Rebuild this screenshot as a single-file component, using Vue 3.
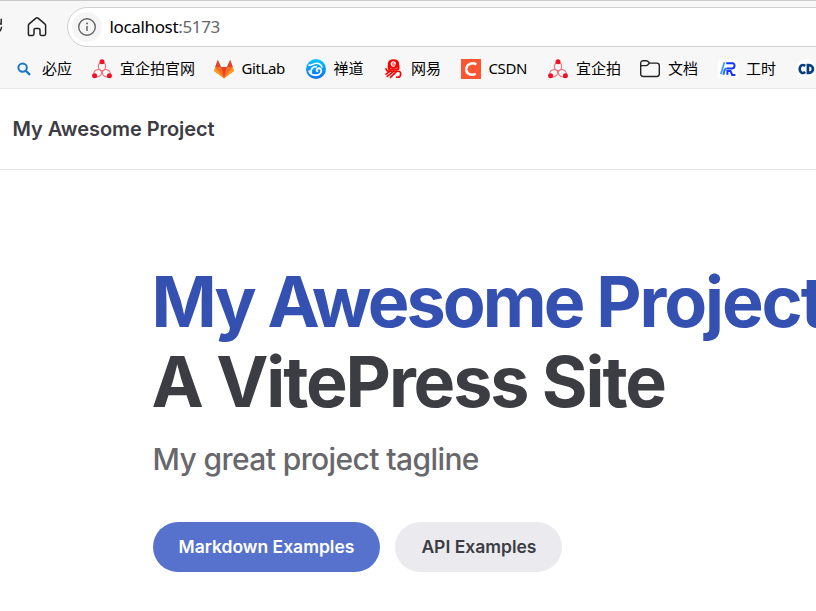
<script setup>
const bookmarks = [
  { icon: 'search', label: '必应' },
  { icon: 'people', label: '宜企拍官网' },
  { icon: 'gitlab', label: 'GitLab', latin: true },
  { icon: 'wave', label: '禅道' },
  { icon: 'netease', label: '网易' },
  { icon: 'csdn', label: 'CSDN', latin: true },
  { icon: 'people', label: '宜企拍' },
  { icon: 'folder', label: '文档' },
  { icon: 'hours', label: '工时' },
  { icon: 'cd', label: '' }
]
</script>

<template>
  <div class="window">
    <header class="browser">
      <div class="toolbar">
        <svg class="reload" width="20" height="20" viewBox="0 0 20 20">
          <path d="M18.2 1.8v5.2h-4.3M18.6 9.8a7.7 7.7 0 0 1-2.8 5.4" />
        </svg>
        <svg class="home" width="20" height="20" viewBox="0 0 20 20">
          <path d="M1.4 8.5c0-.7.3-1.3.8-1.7l6.5-5.4a2 2 0 0 1 2.6 0l6.5 5.4c.5.4.8 1 .8 1.7v8.6c0 .8-.6 1.4-1.4 1.4h-2.8c-.8 0-1.4-.6-1.4-1.4v-4.3c0-.8-.6-1.4-1.4-1.4H8.4c-.8 0-1.4.6-1.4 1.4v4.3c0 .8-.6 1.4-1.4 1.4H2.8c-.8 0-1.4-.6-1.4-1.4z" />
        </svg>
        <div class="address">
          <span class="info">
            <svg width="20" height="20" viewBox="0 0 20 20">
              <circle cx="10" cy="10" r="8.3" fill="none" stroke="#666" stroke-width="1.4" />
              <path d="M10 9v5" stroke="#666" stroke-width="1.5" />
              <circle cx="10" cy="6.5" r="1" fill="#666" />
            </svg>
          </span>
          <span class="url">localhost<span class="port">:5173</span></span>
        </div>
      </div>
      <nav class="bookmarks">
        <div v-for="(b, i) in bookmarks" :key="i" class="bookmark">
          <svg width="20" height="20" viewBox="0 0 20 20">
            <g v-if="b.icon === 'search'" fill="none" stroke="#1b74c9" stroke-width="2">
              <circle cx="8.6" cy="8.6" r="4.2" />
              <path d="M11.8 11.8l4.2 4.1" stroke-width="2.3" />
            </g>
            <g v-else-if="b.icon === 'people'">
              <g fill="none" stroke="#f0707c" stroke-width="1.2">
                <ellipse cx="10" cy="7.4" rx="3.6" ry="4.2" />
                <ellipse cx="5.7" cy="14.2" rx="4.1" ry="3.5" transform="rotate(-35 5.7 14.2)" />
                <ellipse cx="14.3" cy="14.2" rx="4.1" ry="3.5" transform="rotate(35 14.3 14.2)" />
              </g>
              <g fill="#ee1024">
                <circle cx="10" cy="2.8" r="2.5" />
                <circle cx="2.6" cy="16.7" r="2.5" />
                <circle cx="17.4" cy="16.7" r="2.5" />
              </g>
            </g>
            <g v-else-if="b.icon === 'gitlab'">
              <path d="M3.8 1L7 8H13L16.2 1 20 12 10 19.2 0 12z" fill="#fc6d26" />
              <path d="M3.8 1L7 8H1.2zM16.2 1L13 8h5.8z" fill="#e24329" />
              <path d="M7 8h6l-3 11.2z" fill="#e24329" />
              <path d="M1.2 8L0 12l10 7.2zM18.8 8l1.2 4-10 7.2z" fill="#fca326" />
              <path d="M1.2 8H7l3 11.2zM18.8 8H13l-3 11.2z" fill="#fc6d26" />
            </g>
            <g v-else-if="b.icon === 'wave'">
              <defs>
                <linearGradient id="sea" x1="0" y1="0" x2="0" y2="1">
                  <stop offset="0" stop-color="#0bc9fc" />
                  <stop offset="1" stop-color="#0868ef" />
                </linearGradient>
              </defs>
              <circle cx="10" cy="10" r="10" fill="url(#sea)" />
              <g fill="none" stroke="#fff" stroke-linecap="round">
                <path d="M3 6c2 .9 3.4-.9 5.9-1.5 3.4-.8 6.4.9 7.1 3.6" stroke-width="1.6" />
                <path d="M3.2 12.2c1.4 4.5 8.8 5.4 11.3 2 1.9-2.6.2-5-1.9-4.9-2 .1-2.6 2.1-1.2 3" stroke-width="1.9" />
                <path d="M5.2 13.2C4.6 10.3 6.6 7.7 10.2 7.7" stroke-width="1.7" />
              </g>
            </g>
            <g v-else-if="b.icon === 'netease'">
              <ellipse cx="10.5" cy="5" rx="5.7" ry="4.8" fill="#f80000" />
              <path d="M8.4 5h4C12.4 2.1 8.2 2.1 8.2 5c0 2.4 2.8 2.6 4 1.5" fill="none" stroke="#fff" stroke-width="1.2" />
              <g fill="none" stroke="#f80000" stroke-width="1.6" stroke-linecap="round">
                <path d="M5.7 6.8v2.1c0 1.4 1.2 1.6 2.6 1.6h4.6c1.6 0 2.6-.4 2.6-1.6V6.8" stroke-width="2" />
                <path d="M3 9.8c.4 2 1.6 2.6 3.8 2.4h8.7c3.3 0 2.7 6.3-.8 6.1l-1-.2" />
                <path d="M7.1 12.2L3 15.2M10.3 12.6L4.2 17.4M13.4 12.7L7.4 18.4" />
              </g>
            </g>
            <g v-else-if="b.icon === 'csdn'">
              <path d="M0 0h20v20H0z" fill="#fc5531" />
              <path d="M15.4 5.4C11.2 3 5.7 4.7 5.3 10c-.4 5.3 5 7 9.5 4.7" fill="none" stroke="#fff" stroke-width="2.4" />
            </g>
            <path v-else-if="b.icon === 'folder'" d="M.7 4.1c0-1.4 1-2.4 2.4-2.4h3.1c.6 0 1.1.2 1.5.6l1.8 1.8h7.4c1.4 0 2.4 1 2.4 2.4v8.6c0 1.4-1 2.4-2.4 2.4H3.1c-1.4 0-2.4-1-2.4-2.4zM.9 6.6h5.3c.6 0 1-.2 1.4-.6l1.9-1.9" fill="none" stroke="#222" stroke-width="1.4" />
            <g v-else-if="b.icon === 'hours'">
              <rect width="20" height="20" rx="4" fill="#fff" />
              <g fill="none" stroke="#1238fa" stroke-width="2">
                <path d="M6.4 3.2L2.8 15.2" stroke="#3d96fc" stroke-width="1.7" />
                <path d="M8.2 4.2h6.2c3.2 0 2.7 5.3-.5 5.3H8.6" />
                <path d="M8.6 9.5c-2 0-2.2 2-3.2 6.3" stroke="#1e74fb" />
                <path d="M13.2 12H9.4v3.8M12.6 12.2l1.6 3.7h3.2" />
              </g>
            </g>
            <g v-else>
              <circle cx="10" cy="10" r="10" fill="#fff" />
              <g fill="none" stroke="#07417c" stroke-width="2.7">
                <path d="M9.2 7C6.5 4.8 3.7 6.6 3.7 10s2.8 5.2 5.5 3" />
                <path d="M11.9 6.2h1c5.3 0 5.3 7.6 0 7.6h-1z" />
              </g>
            </g>
          </svg>
          <span :class="{ latin: b.latin }">{{ b.label }}</span>
        </div>
      </nav>
    </header>

    <header class="site-nav">My Awesome Project</header>
    <main class="hero">
      <h1><span class="name">My Awesome <span class="last">Project</span></span><span class="text">A VitePress Site</span></h1>
      <p class="tagline">My great project tagline</p>
      <div class="actions">
        <a class="button brand">Markdown Examples</a>
        <a class="button alt">API Examples</a>
      </div>
    </main>
  </div>
</template>

<style>
body {
  margin: 0;
  overflow: hidden;
}
</style>

<style scoped>
.window {
  width: 816px;
  height: 611px;
  overflow: hidden;
  background: #fff;
  font-family: Inter, sans-serif;
  color: #3c3c43;
}
.browser {
  box-sizing: border-box;
  height: 89px;
  background: #f7f7f7;
  border-top: 1px solid #cacaca;
  border-bottom: 1px solid #e9e9e9;
  font-family: "Noto Sans", "Noto Sans CJK SC", sans-serif;
  color: #000;
}
.toolbar {
  display: flex;
  align-items: center;
  height: 39px;
  padding-top: 6px;
}
.reload {
  flex: none;
  margin-left: -17px;
}
.home {
  flex: none;
  margin-left: 24px;
}
.reload path,
.home path {
  fill: none;
  stroke: #222;
  stroke-width: 1.5;
}
.address {
  box-sizing: border-box;
  flex: none;
  display: flex;
  align-items: center;
  width: 790px;
  height: 40px;
  margin-left: 20px;
  padding-left: 4px;
  border: 1px solid #cfcfcf;
  border-radius: 20px;
  background: #fff;
}
.info {
  display: flex;
  align-items: center;
  justify-content: center;
  width: 30px;
  height: 30px;
  border-radius: 50%;
  background: #f5f5f5;
}
.url {
  margin-left: 7.5px;
  font-size: 17px;
  line-height: 24px;
  letter-spacing: -0.35px;
}
.port {
  color: #666;
}
.bookmarks {
  display: grid;
  grid-template-columns: 78px 122px 91.5px 77.5px 78px 87px 92px 78px 78px 78px;
  padding: 3px 0 0 14px;
}
.bookmark {
  display: flex;
  align-items: center;
  gap: 8px;
  height: 40px;
  font-size: 15px;
  line-height: 20px;
  white-space: nowrap;
}
.bookmark svg {
  flex: none;
}
.bookmark span {
  padding-bottom: 2px;
}
.bookmark .latin {
  margin-left: -0.5px;
  letter-spacing: -0.4px;
}
.site-nav {
  height: 80px;
  padding-left: 12.5px;
  border-bottom: 1px solid #e2e2e3;
  font-size: 20px;
  font-weight: 600;
  line-height: 80px;
  letter-spacing: -0.07px;
}
.hero {
  padding: 91.5px 0 0 152.5px;
}
h1 {
  display: flex;
  flex-direction: column;
  margin: 0 0 0 -1px;
  font-size: 70px;
  font-weight: 700;
  line-height: 80px;
  white-space: nowrap;
}
.name {
  color: #3451b2;
  letter-spacing: -2.9px;
}
.last {
  letter-spacing: -2.1px;
}
.text {
  letter-spacing: -2.1px;
}
.tagline {
  margin: 0;
  padding-top: 15px;
  font-size: 30px;
  font-weight: 500;
  line-height: 45px;
  letter-spacing: -0.6px;
  color: #67676c;
}
.actions {
  display: flex;
  gap: 15px;
  padding-top: 40px;
}
.button {
  padding: 0 26px;
  border-radius: 25px;
  font-size: 17.5px;
  font-weight: 600;
  line-height: 50px;
  white-space: nowrap;
}
.brand {
  background: #5672cd;
  color: #fff;
}
.alt {
  background: #ebebef;
}
</style>
